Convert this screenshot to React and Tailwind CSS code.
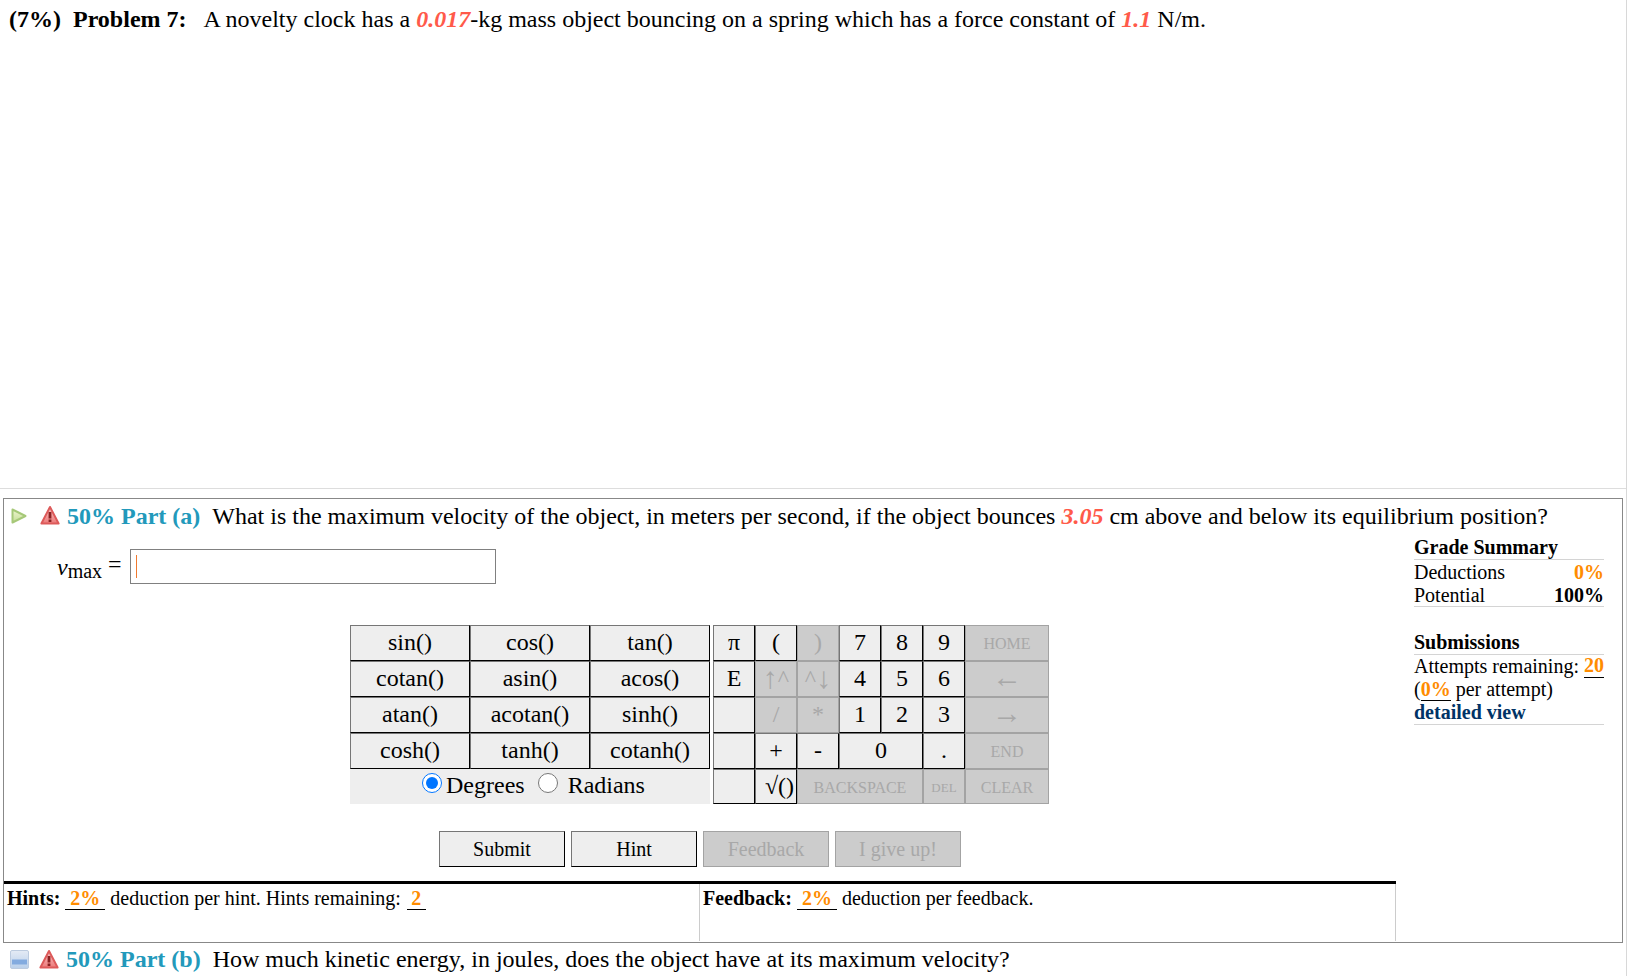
const Play = () => (
  <svg width="18" height="18" viewBox="0 0 18 18">
    <defs>
      <linearGradient id="pl" x1="0" y1="0" x2="0" y2="1">
        <stop offset="0" stopColor="#eef4cf" />
        <stop offset="1" stopColor="#c4de96" />
      </linearGradient>
    </defs>
    <path d="M2.5 2.5 L15.5 9 L2.5 15.5 Z" fill="url(#pl)" stroke="#a6c878" strokeWidth="2" strokeLinejoin="round" />
  </svg>
);

const Warn = ({ id }) => (
  <svg width="20" height="21" viewBox="0 0 20 21">
    <defs>
      <linearGradient id={id} x1="0" y1="0" x2="0" y2="1">
        <stop offset="0" stopColor="#fbc4c4" />
        <stop offset="1" stopColor="#ec7a7a" />
      </linearGradient>
    </defs>
    <path d="M10 2 L18.6 18.5 L1.4 18.5 Z" fill={`url(#${id})`} stroke="#dd5a5a" strokeWidth="2" strokeLinejoin="round" />
    <rect x="8.6" y="7" width="2.8" height="6.5" fill="#8a2222" />
    <rect x="8.6" y="14.5" width="2.8" height="2.5" fill="#8a2222" />
  </svg>
);

const Minimize = () => (
  <svg width="19" height="19" viewBox="0 0 19 19">
    <defs>
      <linearGradient id="mn" x1="0" y1="0" x2="0" y2="1">
        <stop offset="0" stopColor="#e4ebf5" />
        <stop offset="1" stopColor="#b9cfea" />
      </linearGradient>
    </defs>
    <rect x="0.5" y="0.5" width="18" height="18" rx="1.5" fill="url(#mn)" stroke="#bccbdf" />
    <rect x="2" y="9.5" width="15" height="5" fill="#83abdf" />
  </svg>
);

const Key = ({ children, off, className = '' }) => (
  <div
    className={`flex items-center justify-center border ${
      off
        ? 'bg-[#cccccc] text-[#a8a8a8] border-[#a3a3a3]'
        : 'bg-[#eeeeee] text-black border-t-[#767676] border-l-[#767676] border-r-black border-b-black'
    } ${className}`}
  >
    {children}
  </div>
);

// keypad and function keys sit a pixel higher than the buttons
const K = ({ className = '', ...rest }) => <Key {...rest} className={`pb-[2px] ${className}`} />;

const fnKeys = ['sin()', 'cos()', 'tan()', 'cotan()', 'asin()', 'acos()', 'atan()', 'acotan()', 'sinh()', 'cosh()', 'tanh()', 'cotanh()'];

const Pct = ({ children, className = '' }) => (
  <span className={`inline-block border-b border-black text-center font-bold text-[#ff8c00] leading-[21px] ${className}`}>{children}</span>
);

export default function App() {
  return (
    <div className="h-[976px] w-[1627px] overflow-hidden border-r border-[#d8d8d8] bg-white text-black font-['Liberation_Serif',serif]">
      {/* Problem statement */}
      <div className="h-[488px] pl-[9px] pt-[3px] text-[24px] leading-[32px]">
        <b>(7%)</b>
        <b className="ml-[12px]">Problem 7:</b>
        <span className="ml-[17px]">A novelty clock has a </span>
        <b className="italic text-[#ff5a4a]">0.017</b>-kg mass object bouncing on a spring which has a force constant of{' '}
        <b className="italic text-[#ff5a4a]">1.1</b> N/m.
      </div>
      <div className="h-px bg-[#dddddd]" />

      {/* Part (a) */}
      <div className="mt-[9px] ml-[3px] w-[1620px] h-[445px] border border-[#888888]">
        <div className="flex items-center h-[33px] text-[24px] leading-[32px]">
          <span className="ml-[6px] w-[30px]"><Play /></span>
          <span className="w-[20px] mr-[7px]"><Warn id="wa" /></span>
          <b className="text-[#2299bb]">50% Part (a)</b>
          <span className="ml-[12px]">
            What is the maximum velocity of the object, in meters per second, if the object bounces{' '}
            <i className="text-[#ff5a4a] font-bold">3.05</i> cm above and below its equilibrium position?
          </span>
        </div>

        <div className="flex">
          <div className="w-[1392px]">
            <div className="flex items-center mt-[17px] h-[35px]">
              <div className="w-[126px] pl-[53px] text-[24px] leading-none whitespace-nowrap">
                <i>v</i><span className="relative top-[3px] text-[20px]">max</span><span className="ml-[6px] relative -top-[3px]">=</span>
              </div>
              <div className="w-[366px] h-[35px] border border-[#808080] flex items-center pl-[5px]">
                <div className="w-px h-[23px] bg-[#f07a30]" />
              </div>
            </div>

            <div className="flex mt-[41px] ml-[346px] text-[24px]">
              <div className="w-[360px]">
                <div className="grid grid-cols-[repeat(3,120px)] auto-rows-[36px]">
                  {fnKeys.map(k => <K key={k}>{k}</K>)}
                </div>
                <div className="flex items-center justify-center h-[35px] pl-[7px] pb-[4px] bg-[#eeeeee]">
                  <input type="radio" name="unit" defaultChecked className="w-[20px] h-[20px] mr-[4px] -mt-[3px]" />
                  <span>Degrees</span>
                  <input type="radio" name="unit" className="w-[20px] h-[20px] ml-[13px] mr-[10px] -mt-[3px]" />
                  <span>Radians</span>
                </div>
              </div>
              <div className="ml-[3px] grid grid-cols-[repeat(6,42px)_84px] grid-rows-[repeat(4,36px)_35px]">
                <K>π</K>
                <K>(</K>
                <K off>)</K>
                <K>7</K>
                <K>8</K>
                <K>9</K>
                <Key off className="pt-[2px] text-[16px]">HOME</Key>
                <K>E</K>
                <K off><span className="text-[30px] leading-none">↑</span>^</K>
                <K off>^<span className="text-[30px] leading-none">↓</span></K>
                <K>4</K>
                <K>5</K>
                <K>6</K>
                <Key off className="pb-[6px] text-[30px]">←</Key>
                <K />
                <K off>/</K>
                <K off>*</K>
                <K>1</K>
                <K>2</K>
                <K>3</K>
                <Key off className="pb-[6px] text-[30px]">→</Key>
                <K />
                <K>+</K>
                <K>-</K>
                <K className="col-span-2">0</K>
                <K>.</K>
                <Key off className="pt-[2px] text-[16px]">END</Key>
                <K />
                <K className="pl-[7px] whitespace-nowrap">√()</K>
                <Key off className="pt-[2px] col-span-3 text-[16px]">BACKSPACE</Key>
                <Key off className="pt-[2px] text-[13px]">DEL</Key>
                <Key off className="pt-[2px] text-[16px]">CLEAR</Key>
              </div>
            </div>

            <div className="flex gap-[6px] mt-[27px] ml-[435px] text-[20px]">
              <Key className="w-[126px] h-[36px]">Submit</Key>
              <Key className="w-[126px] h-[36px]">Hint</Key>
              <Key off className="w-[126px] h-[36px]">Feedback</Key>
              <Key off className="w-[126px] h-[36px]">I give up!</Key>
            </div>

            <div className="flex mt-[14px] h-[60px] border-t-[3px] border-black text-[20px] leading-[23px]">
              <div className="w-[696px] border-r border-[#cccccc] pl-[3px] pt-[3px]">
                <b>Hints:</b>
                <Pct className="w-[40px] mx-[5px]">2%</Pct>
                deduction per hint. Hints remaining:
                <Pct className="w-[19px] ml-[6px]">2</Pct>
              </div>
              <div className="flex-1 border-r border-[#cccccc] pl-[3px] pt-[3px]">
                <b>Feedback:</b>
                <Pct className="w-[40px] mx-[5px]">2%</Pct>
                deduction per feedback.
              </div>
            </div>
          </div>

          <div className="ml-[18px] mt-[4px] w-[190px] text-[20px] leading-[23px]">
            <div className="font-bold border-b border-[#d4d4d4]">Grade Summary</div>
            <div className="flex justify-between pt-[1px]"><span>Deductions</span><b className="text-[#ff8c00]">0%</b></div>
            <div className="flex justify-between h-[23px] border-b border-[#d4d4d4]"><span>Potential</span><b>100%</b></div>
            <div className="mt-[24px] font-bold border-b border-[#d4d4d4]">Submissions</div>
            <div className="flex justify-between whitespace-nowrap"><span>Attempts remaining:</span><Pct>20</Pct></div>
            <div>(<Pct>0%</Pct> per attempt)</div>
            <div className="font-bold text-[#003366] border-b border-[#d4d4d4]">detailed view</div>
          </div>
        </div>
      </div>

      {/* Part (b) */}
      <div className="flex items-center h-[32px] ml-[10px] text-[24px] leading-[32px]">
        <span className="w-[29px]"><Minimize /></span>
        <span className="w-[20px] mr-[7px]"><Warn id="wb" /></span>
        <b className="text-[#2299bb]">50% Part (b)</b>
        <span className="ml-[12px]">How much kinetic energy, in joules, does the object have at its maximum velocity?</span>
      </div>
    </div>
  );
}
